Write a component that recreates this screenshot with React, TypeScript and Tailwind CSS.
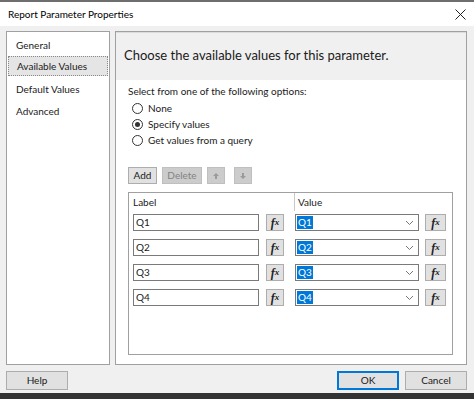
import React from 'react';

const font = "[font-family:'Lato','Liberation_Sans',sans-serif]";

const FxButton = ({ w = 'w-[18px]' }: { w?: string }): JSX.Element => (
  <div className={`${w} h-[17px] bg-[#e1e1e1] border border-[#adadad] flex items-center justify-center [font-family:'Liberation_Serif',serif] italic font-bold text-[12px] leading-none text-[#222]`}>
    f<span className="text-[9px]">x</span>
  </div>
);

const Radio = ({ label, checked }: { label: string; checked?: boolean }): JSX.Element => (
  <div className="flex items-center h-[16px] gap-[5px] pl-[4px]">
    <div className="w-[11px] h-[11px] rounded-full border border-[#333] bg-white flex items-center justify-center">
      {checked && <div className="w-[5px] h-[5px] rounded-full bg-[#333]" />}
    </div>
    <span>{label}</span>
  </div>
);

const Row = ({ q }: { q: string }): JSX.Element => (
  <div className="flex items-center h-[17px]">
    <div className="w-[126px] h-[17px] border border-[#7a7a7a] bg-white flex items-center pl-[2px]">{q}</div>
    <div className="ml-[7px]">
      <FxButton />
    </div>
    <div className="ml-[11px] w-[124px] h-[17px] border border-[#7a7a7a] bg-white flex items-center pl-[1px] pr-[4px] justify-between">
      <span className="bg-[#0078d7] text-white px-[1px] leading-[13px]">{q}</span>
      <svg width="9" height="6" viewBox="0 0 9 6">
        <path d="M1 1 L4.5 4.5 L8 1" fill="none" stroke="#777" strokeWidth="1" />
      </svg>
    </div>
    <div className="ml-[6px]">
      <FxButton w="w-[21px]" />
    </div>
  </div>
);

const App = (): JSX.Element => {
  return (
    <div className={`w-[474px] h-[399px] flex flex-col text-[10px] text-[#1a1a1a] ${font}`}>
      <div className="h-[2px] bg-[#6e6e6e]" />
      <div className="h-[24px] bg-white flex items-center justify-between pl-[8px] pr-[8px]">
        <span className="text-[10px] text-black">Report Parameter Properties</span>
        <svg width="11" height="11" viewBox="0 0 11 11">
          <path d="M0.5 0.5 L10.5 10.5 M10.5 0.5 L0.5 10.5" stroke="#222" strokeWidth="1" />
        </svg>
      </div>
      <div className="flex-1 bg-[#f0f0f0] flex flex-col px-[6px] pt-[5px]">
        <div className="flex gap-[5px] h-[334px]">
          <div className="w-[104px] bg-white border border-[#a0a0a0] pt-[2px] px-[1px]">
            <div className="h-[22px] flex items-center pl-[8px]">General</div>
            <div className="h-[20px] flex items-center pl-[8px] bg-[#e5e5e5] border border-dotted border-[#888]">Available Values</div>
            <div className="h-[22px] mt-[2px] flex items-center pl-[8px]">Default Values</div>
            <div className="h-[22px] flex items-center pl-[8px]">Advanced</div>
          </div>
          <div className="w-[352px] bg-white border border-[#a0a0a0] flex flex-col">
            <div className="h-[48px] bg-[#f0f0f0] border-t border-[#dcdcdc] flex items-center pl-[8px] pb-[2px] text-[13px] text-[#1a1a1a]">
              Choose the available values for this parameter.
            </div>
            <div className="flex flex-col pl-[12px] pt-[3px]">
              <div className="h-[16px] flex items-center">Select from one of the following options:</div>
              <div className="flex flex-col mt-[1px]">
                <Radio label="None" />
                <Radio label="Specify values" checked />
                <Radio label="Get values from a query" />
              </div>
              <div className="flex gap-[5px] mt-[19px] h-[17px]">
                <div className="w-[29px] bg-[#e1e1e1] border border-[#adadad] flex items-center justify-center">Add</div>
                <div className="w-[40px] bg-[#cccccc] border border-[#bfbfbf] text-[#838383] flex items-center justify-center">Delete</div>
                <div className="w-[18px] bg-[#cccccc] border border-[#bfbfbf] flex items-center justify-center">
                  <svg width="8" height="8" viewBox="0 0 8 8"><path d="M4 1 L7 4 L5 4 L5 7 L3 7 L3 4 L1 4 Z" fill="#9a9a9a" /></svg>
                </div>
                <div className="w-[18px] ml-[4px] bg-[#cccccc] border border-[#bfbfbf] flex items-center justify-center">
                  <svg width="8" height="8" viewBox="0 0 8 8"><path d="M4 7 L7 4 L5 4 L5 1 L3 1 L3 4 L1 4 Z" fill="#9a9a9a" /></svg>
                </div>
              </div>
              <div className="mt-[8px] w-[325px] h-[163px] border border-[#a0a0a0] flex flex-col pl-[4px]">
                <div className="h-[18px] flex items-center relative">
                  <span>Label</span>
                  <div className="absolute left-[161px] top-0 h-[18px] border-l border-[#c8c8c8] pl-[3px] flex items-center">Value</div>
                </div>
                <div className="flex flex-col gap-[8px] mt-[3px]">
                  <Row q="Q1" />
                  <Row q="Q2" />
                  <Row q="Q3" />
                  <Row q="Q4" />
                </div>
              </div>
            </div>
          </div>
        </div>
        <div className="flex mt-[6px] h-[19px]">
          <div className="w-[62px] bg-[#e1e1e1] border border-[#adadad] flex items-center justify-center">Help</div>
          <div className="flex-1" />
          <div className="w-[62px] bg-[#e1e1e1] border-2 border-[#0078d7] flex items-center justify-center">OK</div>
          <div className="w-[62px] ml-[6px] mr-[1px] bg-[#e1e1e1] border border-[#adadad] flex items-center justify-center">Cancel</div>
        </div>
      </div>
      <div className="h-[6px] bg-[#333333]" />
    </div>
  );
};

export default App;
